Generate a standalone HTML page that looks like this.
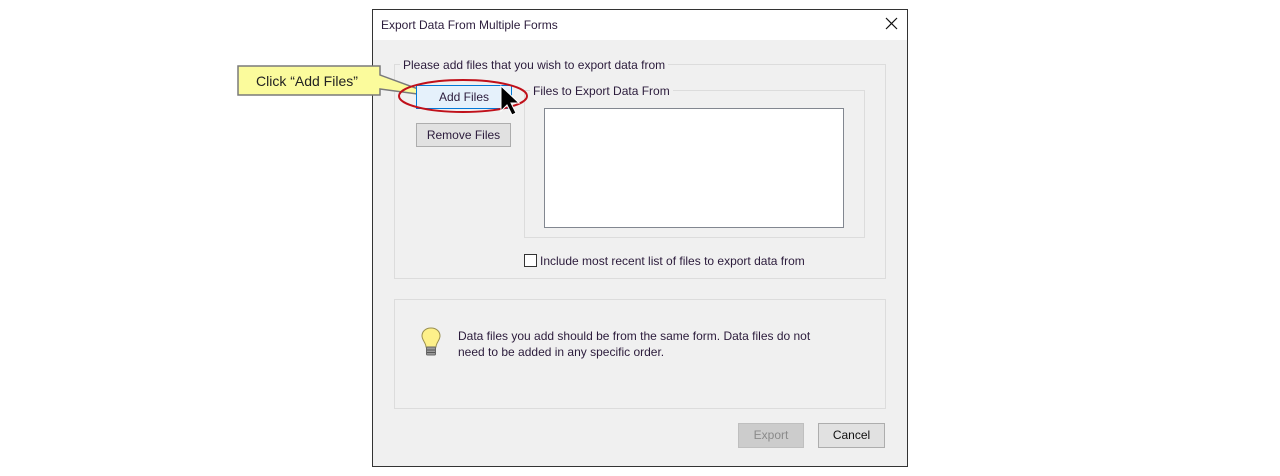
<!DOCTYPE html>
<html><head><meta charset="utf-8"><style>
body{margin:0;width:1280px;height:476px;background:#fff;position:relative;overflow:hidden;font-family:"Liberation Sans",sans-serif;font-size:12px;color:#000}
.a{position:absolute;box-sizing:border-box}
.t{position:absolute;white-space:nowrap;font-size:12px;line-height:16px}
.btn{position:absolute;box-sizing:border-box;background:#e1e1e1;border:1px solid #adadad;text-align:center;font-size:12px;line-height:23px}
</style></head><body>
<div class="a" style="left:372px;top:9px;width:536px;height:458px;border:1px solid #333;background:#f0f0f0"></div>
<div class="a" style="left:373px;top:10px;width:534px;height:30px;background:#fff"></div>
<div class="t" style="left:381px;top:17px;color:#2b1b3b">Export Data From Multiple Forms</div>
<svg class="a" style="left:885px;top:17px" width="13" height="13"><path d="M1 1L12 12M12 1L1 12" stroke="#111" stroke-width="1.2"/></svg>

<div class="a" style="left:394px;top:64px;width:492px;height:215px;border:1px solid #dcdcdc"></div>
<div class="t" style="left:400px;top:57px;background:#f0f0f0;padding:0 3px;color:#2b1b3b">Please add files that you wish to export data from</div>
<div class="a" style="left:524px;top:90px;width:341px;height:148px;border:1px solid #dcdcdc"></div>
<div class="t" style="left:530px;top:83px;background:#f0f0f0;padding:0 3px;color:#2b1b3b">Files to Export Data From</div>
<div class="a" style="left:544px;top:108px;width:300px;height:120px;background:#fff;border:1px solid #828790"></div>
<div class="a" style="left:524px;top:254px;width:13px;height:13px;background:#fff;border:1px solid #333"></div>
<div class="t" style="left:540px;top:253px;color:#2b1b3b">Include most recent list of files to export data from</div>

<svg class="a" style="left:230px;top:55px" width="300" height="70">
<polygon points="8,11 150,11 150,20 210,42 150,34 150,40 8,40" fill="#fbfb9c" stroke="#7a7a7a" stroke-width="1.5"/>
</svg>
<div class="t" style="left:256px;top:73px;font-size:14px;color:#222">Click “Add Files”</div>

<div class="btn" style="left:416px;top:85px;width:96px;height:24px;background:#e5f1fb;border-color:#0078d7;color:#2b1b3b">Add Files</div>
<div class="btn" style="left:416px;top:123px;width:95px;height:24px;color:#2b1b3b">Remove Files</div>

<svg class="a" style="left:230px;top:55px" width="300" height="70">
<ellipse cx="233" cy="41" rx="64" ry="16" fill="none" stroke="#c0101a" stroke-width="2"/>
<path d="M271 31v25l6-6 5 10 4-2-5-10h8z" fill="#000" stroke="#fff" stroke-width="1"/>
</svg>

<div class="a" style="left:394px;top:299px;width:492px;height:110px;border:1px solid #dcdcdc"></div>
<svg class="a" style="left:420px;top:326px" width="22" height="32">
<path d="M11 2C5 2 2 6 2 10c0 4 4 7 4 11h10c0-4 4-7 4-11 0-4-3-8-9-8z" fill="#fdf08a" stroke="#9a8f50"/>
<rect x="6.5" y="21" width="9" height="8" rx="1" fill="#9a9a9a" stroke="#666"/>
<path d="M7 24h8M7 26.5h8" stroke="#555"/></svg>
<div class="t" style="left:458px;top:328px;line-height:16px;color:#2b1b3b">Data files you add should be from the same form. Data files do not<br>need to be added in any specific order.</div>

<div class="btn" style="left:738px;top:423px;width:66px;height:25px;background:#cccccc;border-color:#bfbfbf;color:#8a8a8a">Export</div>
<div class="btn" style="left:818px;top:423px;width:67px;height:25px;color:#111">Cancel</div>
</body></html>
